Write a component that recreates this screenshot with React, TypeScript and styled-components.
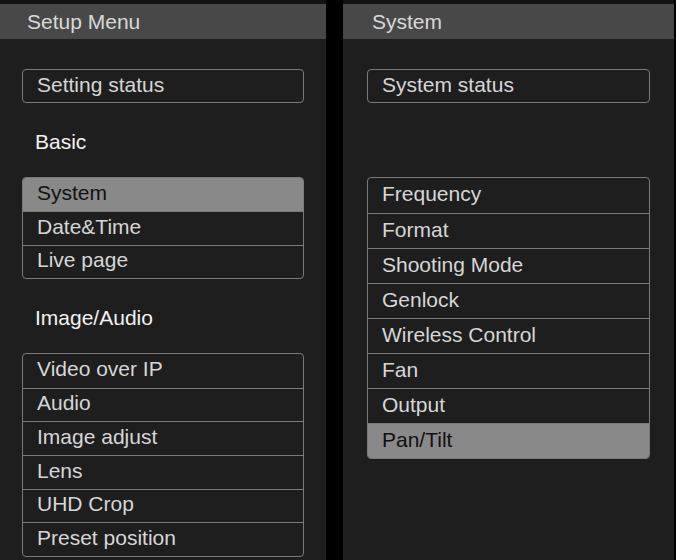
import React from 'react';
import styled, { createGlobalStyle } from 'styled-components';

const GlobalStyle = createGlobalStyle`
  html, body {
    margin: 0;
    padding: 0;
    background: #000;
    font-family: "Liberation Sans", Arial, sans-serif;
  }
`;

const Screen = styled('div')`
  display: flex;
  width: 676px;
  height: 560px;
  overflow: hidden;
  background: #000;
`;

const Panel = styled('div')<{ $width: number; $pad: number }>`
  width: ${({ $width }) => $width}px;
  margin-right: ${({ $width }) => ($width > 330 ? 2 : 17)}px;
  display: flex;
  flex-direction: column;
  background: #1e1e1f;
  border-top: 4px solid #131313;
  padding: 0 ${({ $pad }) => $pad}px;
  box-sizing: border-box;
`;

const Header = styled('div')<{ $pad: number }>`
  height: 35px;
  line-height: 35px;
  margin: 0 -${({ $pad }) => $pad}px;
  padding-left: ${({ $pad }) => $pad + 5}px;
  background: #484848;
  color: #d9d9d9;
  font-size: 21px;
`;

const StatusBox = styled('div')`
  margin-top: 30px;
  height: 34px;
  box-sizing: border-box;
  border: 1px solid #7a7a7a;
  border-radius: 4px;
  padding: 0 0 3px 14px;
  display: flex;
  align-items: center;
  color: #d6d6d6;
  font-size: 21px;
`;

const GroupLabel = styled('div')`
  padding: 27px 0 23px 13px;
  height: 24px;
  line-height: 24px;
  color: #f2f2f2;
  font-size: 21px;
`;

const Spacer = styled('div')<{ $h: number }>`
  height: ${({ $h }) => $h}px;
`;

const List = styled('div')`
  border: 1px solid #7a7a7a;
  border-radius: 4px;
  overflow: hidden;
  display: flex;
  flex-direction: column;
`;

const Row = styled('div')<{ $h: number; $active?: boolean }>`
  height: ${({ $h }) => $h}px;
  box-sizing: border-box;
  padding: 0 0 3px 14px;
  display: flex;
  align-items: center;
  font-size: 21px;
  color: ${({ $active }) => ($active ? '#111' : '#d6d6d6')};
  background: ${({ $active }) => ($active ? '#898989' : 'transparent')};
  & + & {
    border-top: 1px solid #7a7a7a;
  }
`;

type Group = { label: string; rows: string[]; rowH: number };

const leftGroups: Group[] = [
  { label: 'Basic', rows: ['System', 'Date&Time', 'Live page'], rowH: 33.33 },
  {
    label: 'Image/Audio',
    rows: ['Video over IP', 'Audio', 'Image adjust', 'Lens', 'UHD Crop', 'Preset position'],
    rowH: 33.67,
  },
];

const systemRows = [
  'Frequency',
  'Format',
  'Shooting Mode',
  'Genlock',
  'Wireless Control',
  'Fan',
  'Output',
  'Pan/Tilt',
];

function MenuList({ rows, rowH, active }: { rows: string[]; rowH: number; active: string }) {
  return (
    <List>
      {rows.map((r) => (
        <Row key={r} $h={rowH} $active={r === active}>
          {r}
        </Row>
      ))}
    </List>
  );
}

export default function App() {
  return (
    <>
      <GlobalStyle />
      <Screen>
        <Panel $width={326} $pad={22}>
          <Header $pad={22}>Setup Menu</Header>
          <StatusBox>Setting status</StatusBox>
          {leftGroups.map((g) => (
            <React.Fragment key={g.label}>
              <GroupLabel>{g.label}</GroupLabel>
              <MenuList rows={g.rows} rowH={g.rowH} active="System" />
            </React.Fragment>
          ))}
        </Panel>
        <Panel $width={331} $pad={24}>
          <Header $pad={24}>System</Header>
          <StatusBox>System status</StatusBox>
          <Spacer $h={74} />
          <MenuList rows={systemRows} rowH={35} active="Pan/Tilt" />
        </Panel>
      </Screen>
    </>
  );
}
